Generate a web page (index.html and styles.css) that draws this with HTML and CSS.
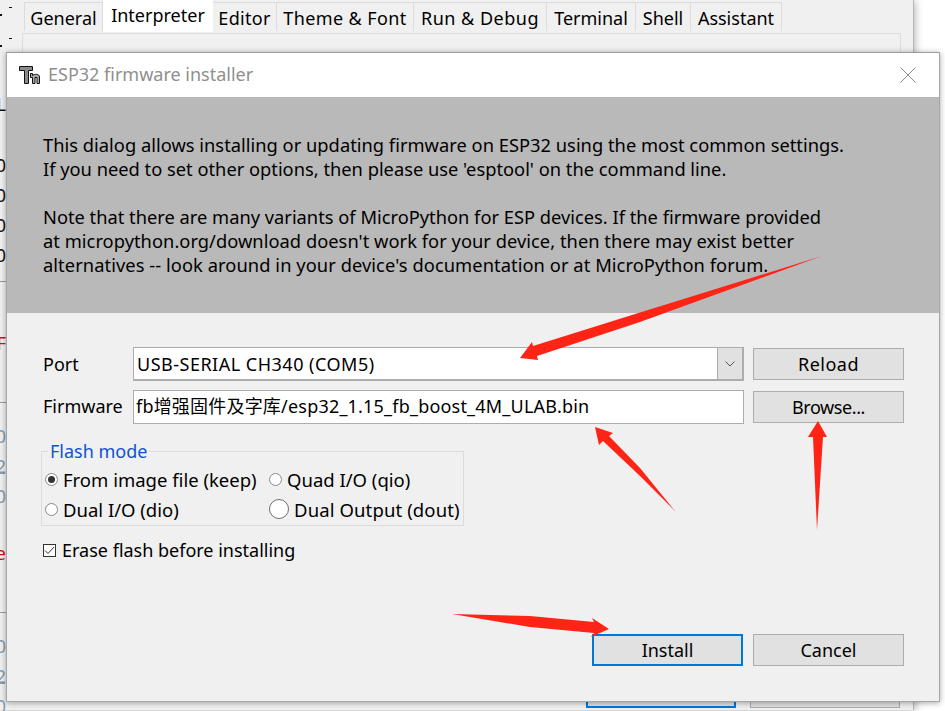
FILE: index.html
```html
<!DOCTYPE html>
<html lang="en">
<head>
<meta charset="utf-8">
<title>ESP32 firmware installer</title>
<link rel="stylesheet" href="styles.css">
</head>
<body>
<div class="parent">
  <div class="tabs">
    <span class="tab t-general">General</span>
    <span class="tab active t-interp">Interpreter</span>
    <span class="tab t-editor">Editor</span>
    <span class="tab t-theme">Theme &amp; Font</span>
    <span class="tab t-run">Run &amp; Debug</span>
    <span class="tab t-term">Terminal</span>
    <span class="tab t-shell">Shell</span>
    <span class="tab t-assist">Assistant</span>
  </div>
  <div class="pane"></div>
  <div class="parent-buttons"><span class="pb pb-blue"></span><span class="pb"></span></div>
</div>
<div class="frags">
  <b class="dash" style="top:7px"></b>
  <b class="dash" style="top:38px"></b>
  <b class="dot" style="top:14px"></b>
  <b class="dot" style="top:45px"></b>
  <i class="frag fd" style="top:92px">L</i>
  <i class="frag fd" style="top:153px">0</i>
  <i class="frag fd" style="top:183px">0</i>
  <i class="frag fd" style="top:213px">0</i>
  <i class="frag fd" style="top:243px">0</i>
  <i class="frag fr" style="top:331px">F</i>
  <i class="frag fg" style="top:424px">0</i>
  <i class="frag fg" style="top:454px">2</i>
  <i class="frag fg" style="top:484px">0</i>
  <i class="frag fr" style="top:541px">e</i>
  <i class="frag fg" style="top:634px">0</i>
  <i class="frag fg" style="top:664px">2</i>
  <i class="frag fg" style="top:694px">0</i>
  <b class="rule" style="top:281px"></b>
  <b class="rule" style="top:402px"></b>
  <b class="rule" style="top:612px"></b>
  <b class="rule under" style="top:473px"></b>
  <b class="rule under" style="top:683px"></b>
</div>
<div class="dialog">
  <header class="titlebar">
    <svg class="logo" width="21" height="19" viewBox="0 0 21 19"><path d="M0.5 0.5H13.5V4.5H9.5V17.5H5.5V4.5H0.5Z" fill="#8c8c8c" stroke="#111" stroke-width="1"/><path d="M11.5 7.5H13.5V9.5C15 8 20.5 7.5 20.5 11V17.5H18V11.5H16V17.5H13.5V11.5H11.5Z" fill="#a8a8a8" stroke="#111" stroke-width="1"/></svg>
    <span class="title">ESP32 firmware installer</span>
    <svg class="close" width="16" height="16" viewBox="0 0 16 16"><path d="M0.5 0.5L15.5 15.5M15.5 0.5L0.5 15.5" stroke="#8a8a8a" stroke-width="1" fill="none"/></svg>
  </header>
  <section class="banner">
    <p><span class="ls-c">This dialog allows installing or updating firmware on ESP32 using the most common settings.</span><br>If you need to set other options, then please use 'esptool' on the command line.</p>
    <p>Note that there are many variants of MicroPython for ESP devices. If the firmware provided<br><span class="ls-a">at micropython.org/download doesn't work for your device, then there may exist better</span><br><span class="ls-b">alternatives -- look around in your device's documentation or at MicroPython forum.</span></p>
  </section>
  <main class="body">
    <div class="form">
      <label class="lbl">Port</label>
      <div class="combo"><span class="combo-text">USB-SERIAL CH340 (COM5)</span><span class="combo-btn"><svg width="10" height="6" viewBox="0 0 10 6"><path d="M0.5 0.5L5 5L9.5 0.5" fill="none" stroke="#555" stroke-width="1"/></svg></span></div>
      <button class="btn reload">Reload</button>
      <label class="lbl lbl-fw">Firmware</label>
      <div class="entry">fb增强固件及字库/esp32_1.15_fb_boost_4M_ULAB.bin</div>
      <button class="btn browse">Browse...</button>
    </div>
    <fieldset class="mode">
      <legend>Flash mode</legend>
      <div class="opt"><span class="radio on"></span>From image file (keep)</div>
      <div class="opt"><span class="radio"></span>Quad I/O (qio)</div>
      <div class="opt"><span class="radio"></span>Dual I/O (dio)</div>
      <div class="opt wide"><span class="radio large"></span>Dual Output (dout)</div>
    </fieldset>
    <div class="erase"><span class="check"><svg width="11" height="9" viewBox="0 0 11 9"><path d="M1 4.5L4 7.5L10 1" fill="none" stroke="#333" stroke-width="1"/></svg></span>Erase flash before installing</div>
    <div class="actions">
      <button class="btn primary">Install</button>
      <button class="btn">Cancel</button>
    </div>
  </main>
</div>
<svg class="arrows" width="945" height="711" viewBox="0 0 945 711">
  <g fill="#ff2416">
    <path d="M822 256L640 312.5L533 346L532 342L520 358L538 360L537 356L640 322Z"/>
    <path d="M675 511L640 468L609 436L613 433L595 427L599 445L603 441L640 476Z"/>
    <path d="M817 530L813 437L808 437L818 421L827 437L823 437Z"/>
    <path d="M452 614L530 616L594 622L592 618L609 629L591 637L594 633L530 627Z"/>
  </g>
</svg>
</body>
</html>
```
FILE: styles.css
```css
html, body { margin: 0; padding: 0; }
body {
  width: 945px;
  height: 711px;
  overflow: hidden;
  position: relative;
  background: #ffffff;
  font-family: "Noto Sans", "Noto Sans CJK SC", sans-serif;
  color: #000;
}
.parent {
  position: absolute;
  left: 0;
  top: 0;
  width: 914px;
  height: 710px;
  background: #f0f0f0;
  box-shadow: 1px 1px 8px rgba(0,0,0,.3);
  border-right: 1px solid #b8b8b8;
  box-sizing: border-box;
}
.tabs {
  display: flex;
  padding: 2px 0 0 24px;
  height: 31px;
  box-sizing: border-box;
  align-items: flex-start;
  font-size: 18px;
}
.tab {
  height: 29px;
  line-height: 31px;
  box-sizing: border-box;
  border: 1px solid #dcdcdc;
  border-bottom: 0;
  border-left: 0;
  text-align: center;
  white-space: nowrap;
}
.t-general { width: 79px; border-left: 1px solid #dcdcdc; }
.t-interp { width: 110px; }
.t-editor { width: 64px; letter-spacing: .3px; }
.t-theme { width: 137px; letter-spacing: .4px; }
.t-run { width: 133px; letter-spacing: .5px; }
.t-term { width: 89px; }
.t-shell { width: 55px; }
.t-assist { width: 91px; }
.tab.active {
  background: #fff;
  height: 32px;
  margin-top: -2px;
  line-height: 31px;
  border: 0;
}
.pane {
  margin: 2px 12px 0 22px;
  height: 300px;
  border: 1px solid #dcdcdc;
  box-sizing: border-box;
  background: #f0f0f0;
}
.parent-buttons {
  position: absolute;
  left: 586px;
  top: 690px;
  display: flex;
  gap: 14px;
}
.pb {
  width: 150px;
  height: 18px;
  box-sizing: border-box;
  border: 1px solid #adadad;
  background: #e1e1e1;
}
.pb-blue { border: 2px solid #0078d7; }
.frags {
  position: absolute;
  left: 0;
  top: 0;
  width: 24px;
  height: 711px;
  overflow: hidden;
}
.frag {
  position: absolute;
  right: 18px;
  font-style: normal;
  font-size: 18px;
  line-height: 24px;
}
.fd { color: #111; }
.fr { color: #d01010; }
.fg { color: #8d9bab; }
.dash {
  position: absolute;
  left: 9px;
  width: 3px;
  height: 1px;
  background: #111;
}
.dot {
  position: absolute;
  left: 0;
  width: 2px;
  height: 2px;
  background: #111;
}
.rule {
  position: absolute;
  left: 0;
  width: 6px;
  height: 1px;
  background: #9a9a9a;
}
.rule.under { width: 5px; background: #8d9bab; }
.dialog {
  position: absolute;
  left: 6px;
  top: 52px;
  width: 934px;
  height: 650px;
  box-sizing: border-box;
  border: 1px solid #a6a6a6;
  border-top-color: #9c9c9c;
  background: #f0f0f0;
  box-shadow: 0 1px 6px rgba(0,0,0,.35);
  display: flex;
  flex-direction: column;
}
.titlebar {
  height: 44px;
  background: #fff;
  display: flex;
  align-items: center;
  padding: 0 23px 0 12px;
  flex: none;
}
.logo { flex: none; margin-right: 8px; }
.title { color: #8f8f8f; font-size: 18px; flex: 1; line-height: 42px; height: 44px; }
.close { flex: none; }
.banner {
  height: 216px;
  flex: none;
  background: #b9b9b9;
  box-sizing: border-box;
  padding: 36px 0 0 36px;
  font-size: 18.3px;
  line-height: 24px;
  color: #000;
}
.banner p { margin: 0 0 24px; white-space: nowrap; }
.ls-a { letter-spacing: .035px; }
.ls-b { letter-spacing: .07px; }
.ls-c { letter-spacing: .02px; }
.body {
  flex: 1;
  box-sizing: border-box;
  padding: 34px 35px 0 34px;
  display: flex;
  flex-direction: column;
  align-items: flex-start;
  font-size: 18px;
}
.form {
  display: grid;
  grid-template-columns: 92px 611px 151px;
  column-gap: 0;
  row-gap: 9px;
  align-items: center;
  width: 863px;
}
.form .btn { margin-left: 9px; width: 151px; }
.reload { letter-spacing: .5px; }
.browse { letter-spacing: -.4px; padding-bottom: 2px; }
.lbl { padding-left: 2px; line-height: 32px; }
.lbl-fw { align-self: start; }
.combo {
  height: 34px;
  box-sizing: border-box;
  border: 1px solid #adadad;
  border-width: 1px 1px 2px 1px;
  background: #fff;
  display: flex;
  width: 611px;
}
.combo-text { flex: 1; padding-left: 3px; line-height: 32px; white-space: nowrap; letter-spacing: .5px; }
.combo-btn {
  width: 26px;
  background: #e1e1e1;
  border-left: 1px solid #adadad;
  display: flex;
  align-items: center;
  justify-content: center;
  border-right: 1px solid #adadad;
  box-sizing: border-box;
}
.entry {
  height: 34px;
  width: 611px;
  box-sizing: border-box;
  border: 1px solid #adadad;
  background: #fff;
  padding-left: 2px;
  line-height: 30px;
  white-space: nowrap;
  letter-spacing: .2px;
}
.btn {
  height: 32px;
  box-sizing: border-box;
  border: 1px solid #adadad;
  background: #e1e1e1;
  font: inherit;
  color: #000;
  padding: 0;
}
.mode {
  margin: 17px 0 0 0;
  padding: 3px 0 1px 3px;
  width: 423px;
  height: 85px;
  box-sizing: border-box;
  border: 1px solid #dcdcdc;
  display: grid;
  grid-template-columns: 224px 1fr;
  grid-auto-rows: 30px;
  min-width: 0;
  font-size: 18.5px;
}
.mode legend {
  color: #0f52d8;
  padding: 0 2px;
  margin-left: 3px;
  line-height: 20px;
  font-size: 18px;
}
.opt {
  display: flex;
  align-items: center;
  white-space: nowrap;
  gap: 5px;
  height: 30px;
}
.wide { letter-spacing: .12px; }
.radio {
  width: 13px;
  height: 13px;
  box-sizing: border-box;
  border: 1px solid #8a8a8a;
  border-radius: 50%;
  background: #fff;
  flex: none;
  position: relative;
}
.radio.on::after {
  content: "";
  position: absolute;
  left: 2px;
  top: 2px;
  width: 7px;
  height: 7px;
  border-radius: 50%;
  background: #333;
}
.radio.large { width: 20px; height: 20px; border-color: #6e6e6e; }
.erase {
  display: flex;
  align-items: center;
  gap: 6px;
  margin-top: 9px;
  height: 30px;
  white-space: nowrap;
}
.check {
  width: 13px;
  height: 13px;
  box-sizing: border-box;
  border: 1px solid #333;
  background: #fff;
  display: flex;
  align-items: center;
  justify-content: center;
  flex: none;
  margin-left: 2px;
}
.actions {
  margin-top: 69px;
  align-self: flex-end;
  display: flex;
  gap: 10px;
}
.actions .btn { width: 151px; height: 32px; }
.primary { border: 2px solid #0078d7; }
.arrows { position: absolute; left: 0; top: 0; pointer-events: none; }
```
